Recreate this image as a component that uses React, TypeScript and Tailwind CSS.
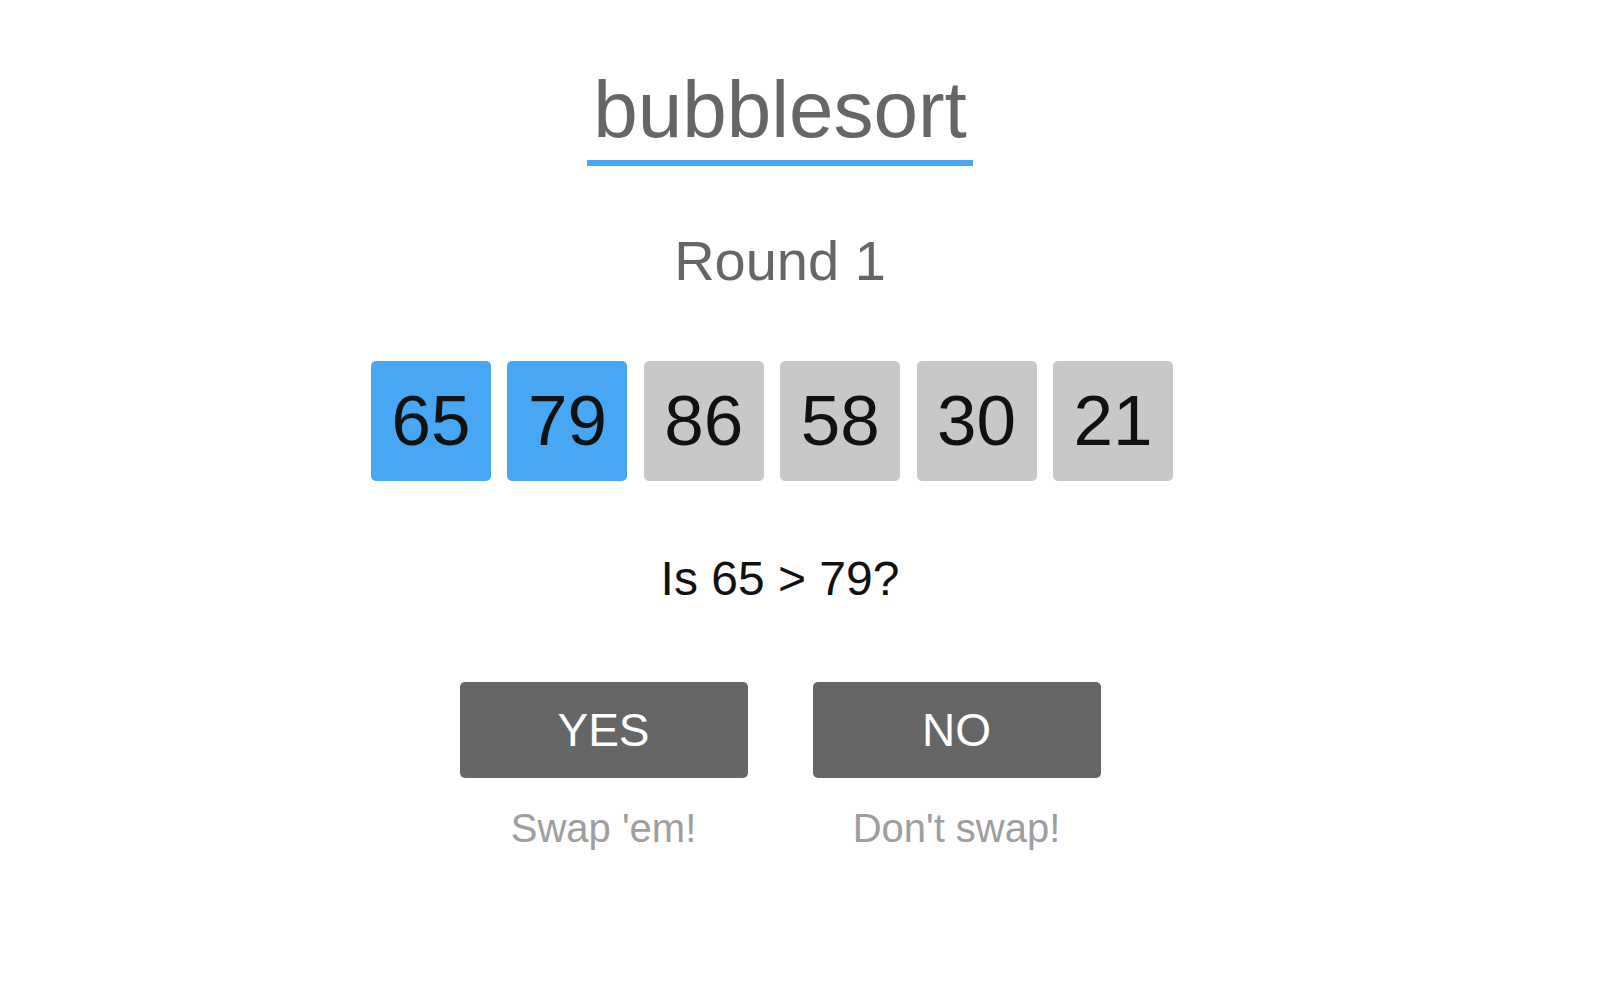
import React from "react";

const nums = [
  { v: 65, active: true },
  { v: 79, active: true },
  { v: 86, active: false },
  { v: 58, active: false },
  { v: 30, active: false },
  { v: 21, active: false },
];

export default function App() {
  return (
    <div
      className="w-[1560px] min-h-[1008px] bg-white flex flex-col items-center"
      style={{ fontFamily: '"Liberation Sans", Arial, sans-serif' }}
    >
      <div className="mt-[70px] inline-block px-[6px] pb-[10px] border-b-[6px] border-[#47a7f4] text-[80px] leading-[80px] text-[#666666]">
        bubblesort
      </div>

      <div className="mt-[67px] text-[56px] leading-[56px] text-[#666666]">
        Round 1
      </div>

      <div className="mt-[72px] w-full flex justify-center pr-[16px] gap-[16.4px]">
        {nums.map((n) => (
          <div
            key={n.v}
            className={
              n.active
                ? "w-[120px] h-[120px] rounded-[5px] bg-[#47a7f4] flex items-center justify-center text-[71px] leading-[72px] text-[#111111]"
                : "w-[120px] h-[120px] rounded-[5px] bg-[#c8c8c8] flex items-center justify-center text-[71px] leading-[72px] text-[#111111]"
            }
          >
            {n.v}
          </div>
        ))}
      </div>

      <div className="mt-[74px] text-[48px] leading-[48px] text-[#111111]">
        Is 65 &gt; 79?
      </div>

      <div className="mt-[79px] flex gap-[65px]">
        <div className="flex flex-col items-center">
          <div className="w-[288px] h-[96px] rounded-[5px] bg-[#666666] flex items-center justify-center text-[46px] leading-[46px] text-white">
            YES
          </div>
          <div className="mt-[30px] text-[40px] leading-[40px] text-[#9e9e9e]">
            Swap 'em!
          </div>
        </div>
        <div className="flex flex-col items-center">
          <div className="w-[288px] h-[96px] rounded-[5px] bg-[#666666] flex items-center justify-center text-[46px] leading-[46px] text-white">
            NO
          </div>
          <div className="mt-[30px] text-[40px] leading-[40px] text-[#9e9e9e]">
            Don't swap!
          </div>
        </div>
      </div>
    </div>
  );
}
